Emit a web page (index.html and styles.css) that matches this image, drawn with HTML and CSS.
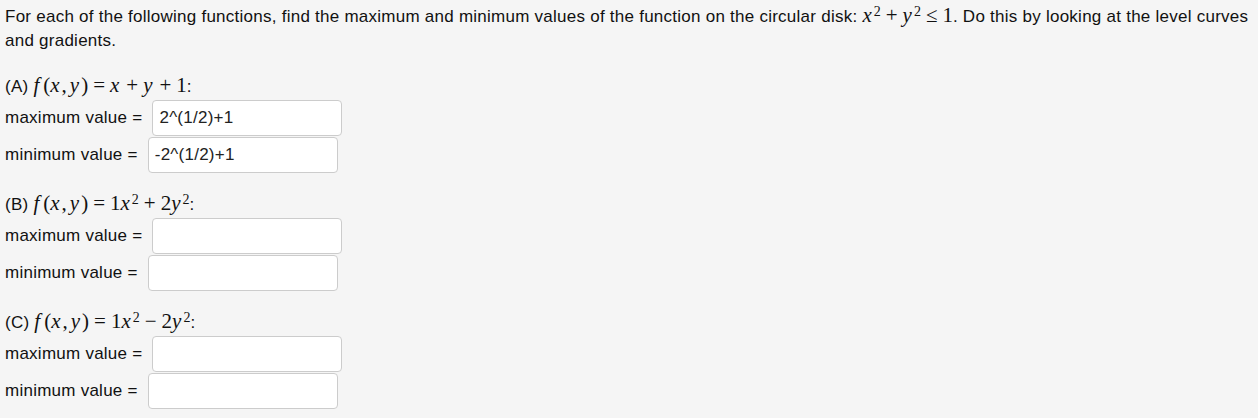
FILE: index.html
```html
<!DOCTYPE html>
<html>
<head>
<meta charset="utf-8">
<link rel="stylesheet" href="styles.css">
</head>
<body>
<div class="page">
  <p class="intro">For each of the following functions, find the maximum and minimum values of the function on the circular disk: <span class="m"><i>x</i><sup>2</sup><span class="op">+</span><i>y</i><sup>2</sup><span class="rel">≤</span>1</span>. Do this by looking at the level curves and gradients.</p>

  <div class="part">
    <div class="head">(A) <span class="m"><i class="f">f</i>(<i>x</i>,<span class="th"></span><i>y</i>)<span class="rel">=</span><i>x</i><span class="op">+</span><i>y</i><span class="op">+</span>1</span>:</div>
    <div class="row"><span class="lbl">maximum value =</span><input class="ans" type="text" value="2^(1/2)+1"></div>
    <div class="row"><span class="lbl">minimum value =</span><input class="ans" type="text" value="-2^(1/2)+1"></div>
  </div>

  <div class="part">
    <div class="head">(B) <span class="m"><i class="f">f</i>(<i>x</i>,<span class="th"></span><i>y</i>)<span class="rel">=</span>1<i>x</i><sup>2</sup><span class="op">+</span>2<i>y</i><sup>2</sup></span>:</div>
    <div class="row"><span class="lbl">maximum value =</span><input class="ans" type="text" value=""></div>
    <div class="row"><span class="lbl">minimum value =</span><input class="ans" type="text" value=""></div>
  </div>

  <div class="part">
    <div class="head">(C) <span class="m"><i class="f">f</i>(<i>x</i>,<span class="th"></span><i>y</i>)<span class="rel">=</span>1<i>x</i><sup>2</sup><span class="op">−</span>2<i>y</i><sup>2</sup></span>:</div>
    <div class="row"><span class="lbl">maximum value =</span><input class="ans" type="text" value=""></div>
    <div class="row"><span class="lbl">minimum value =</span><input class="ans" type="text" value=""></div>
  </div>
</div>
</body>
</html>
```

FILE: styles.css
```css
html, body {
  margin: 0;
  padding: 0;
  background: #f5f5f5;
}
.page {
  padding: 5px 4px 0 5px;
  font-family: "Liberation Sans", Arial, sans-serif;
  font-size: 17px;
  letter-spacing: 0.25px;
  color: #111;
}
.intro {
  margin: 0;
  line-height: 24px;
}
.m {
  font-family: "Liberation Serif", "DejaVu Serif", serif;
  font-size: 21px;
  letter-spacing: 0;
  line-height: 1;
}
.m i {
  font-style: italic;
  padding-right: 2px;
}
.m i.f {
  padding-right: 4px;
}
.m sup {
  font-size: 14px;
  line-height: 0;
  vertical-align: 6px;
}
.op {
  margin: 0 5px;
}
.rel {
  margin: 0 5px;
}
.th {
  display: inline-block;
  width: 3px;
}
.part {
  margin-top: 20px;
}
.part:first-of-type {
  margin-top: 22px;
}
.head {
  height: 24px;
  line-height: 24px;
}
.row {
  display: flex;
  align-items: center;
  height: 37px;
}
.lbl {
  white-space: nowrap;
}
.ans {
  margin-left: 10px;
  width: 190px;
  height: 36px;
  box-sizing: border-box;
  border: 1px solid #ccc;
  border-radius: 4px;
  background: #fff;
  padding: 0 6px;
  font-family: "Liberation Sans", Arial, sans-serif;
  font-size: 17px;
  letter-spacing: 0.25px;
  color: #222;
  outline: none;
}
```
